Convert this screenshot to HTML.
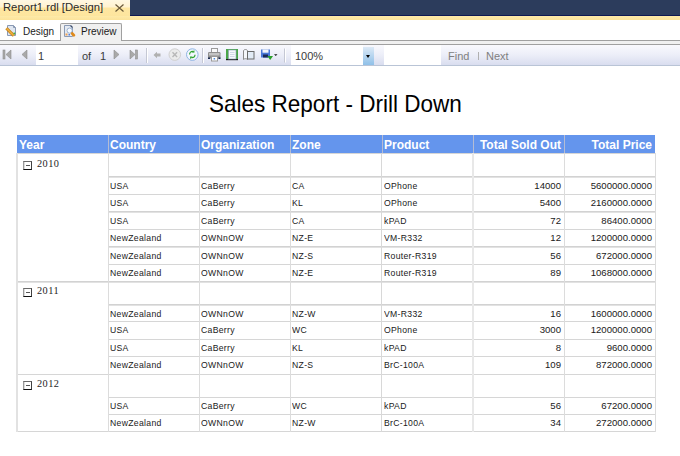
<!DOCTYPE html>
<html><head><meta charset="utf-8">
<style>
*{margin:0;padding:0;box-sizing:border-box}
html,body{width:680px;height:456px;overflow:hidden;background:#fff;font-family:"Liberation Sans",sans-serif;position:relative}
.a{position:absolute}
.t{position:absolute;white-space:nowrap;line-height:1}
#navy{left:130px;top:0;width:550px;height:16px;background:#2c3c5c;border-bottom:1px solid #0e1852}
#doctab{left:0;top:0;width:130px;height:20px;background:linear-gradient(#fff8e2 0,#fff2d0 7px,#fee7a2 8px,#fde49c 100%)}
#strip{left:0;top:16px;width:680px;height:4px;background:linear-gradient(#feeaa8,#fce39a)}
#tabline1{left:0;top:40px;width:680px;height:1px;background:#a0a0a0}
#tabfill{left:0;top:41px;width:680px;height:3px;background:#f0f0f0}
#tabline2{left:0;top:44px;width:680px;height:1px;background:#a0a0a0}
#prevtab{left:60px;top:23px;width:62px;height:18px;background:#f0f0f0;border:1px solid #a0a0a0;border-bottom:none;border-radius:2px 2px 0 0}
#toolbar{left:0;top:45px;width:680px;height:21px;background:linear-gradient(#f9f9fd,#eceef8 50%,#d9ddef);border-bottom:1px solid #b9c4d6}
.tb{font-size:11px;color:#808080;margin-top:0.5px}
.hdr{position:absolute;top:135px;height:18px;background:#6495ed}
.ht{position:absolute;top:139px;font-weight:bold;font-size:12px;color:#fff;white-space:nowrap;line-height:1}
.hl{position:absolute;background:#d3d3d3}
.d{position:absolute;font-size:9.6px;color:#1a1a1a;white-space:nowrap;line-height:1;transform:scaleX(0.9);transform-origin:0 0;letter-spacing:0.35px}
.n{position:absolute;font-size:9.6px;color:#1a1a1a;white-space:nowrap;line-height:1;text-align:right}
.r{text-align:right}
.yr{position:absolute;font-family:"Liberation Serif",serif;font-size:10.3px;color:#1e1e1e;line-height:1;letter-spacing:0.45px}
.box{position:absolute;left:23px;width:9px;height:9px;border-left:1px solid #9a9a9a;border-top:1px solid #6a6a6a;border-right:1px solid #404040;border-bottom:1px solid #111;background:#fff;box-shadow:inset 1px 0 #dcdcdc}
.box:after{content:"";position:absolute;left:2px;top:3px;width:4px;height:1px;background:#555}
</style></head><body>
<div id="navy" class="a"></div>
<div id="doctab" class="a"></div>
<div id="strip" class="a"></div>
<div class="t" style="left:3px;top:2px;font-size:11.25px;color:#2a2a2a">Report1.rdl [Design]</div>
<svg class="a" style="left:115px;top:4px" width="9" height="8" viewBox="0 0 9 8"><path d="M0.5 0.5L8.5 7.5M8.5 0.5L0.5 7.5" stroke="#6b5a3a" stroke-width="1.2"/></svg>

<div id="tabline1" class="a"></div>
<div id="tabfill" class="a"></div>
<div id="tabline2" class="a"></div>
<div id="prevtab" class="a"></div>
<div class="t" style="left:23px;top:27px;font-size:10px;color:#1a1a1a">Design</div>
<div class="t" style="left:81px;top:27px;font-size:10px;color:#1a1a1a">Preview</div>

<div id="toolbar" class="a"></div>

<!-- tab icons -->
<svg class="a" style="left:4px;top:24px" width="13" height="13" viewBox="0 0 13 13">
 <path d="M3.5 1.5H9.5L11.5 3.5V11.5H3.5Z" fill="#dfe6f0" stroke="#8a9ab4" stroke-width="1"/>
 <path d="M9.5 1.5V3.5H11.5" fill="none" stroke="#8a9ab4" stroke-width="1"/>
 <path d="M2.4 4.2L9.8 11.6" stroke="#c07a10" stroke-width="3" stroke-linecap="butt"/>
 <path d="M2.4 4.2L9.8 11.6" stroke="#eeb040" stroke-width="1.6"/>
 <rect x="9.6" y="8.6" width="1.6" height="1.6" fill="#3cb43c"/>
</svg>
<svg class="a" style="left:63px;top:24px" width="13" height="13" viewBox="0 0 13 13">
 <path d="M1.5 1.5H7.5L9.5 3.5V12.5H1.5Z" fill="#e4eaf2" stroke="#8a9ab4" stroke-width="1"/>
 <path d="M7.5 1.5L9.5 3.5" stroke="#3a4a6a" stroke-width="1.2"/>
 <circle cx="6.6" cy="6.6" r="2.6" fill="#f8fbff" stroke="#90a8c8" stroke-width="0.9"/>
 <path d="M9.2 9.6L10.8 11.2" stroke="#e08a1a" stroke-width="2.8" stroke-linecap="round"/>
 <rect x="2.5" y="9.5" width="2" height="2" fill="#f0a050"/>
 <rect x="5.5" y="10" width="1.5" height="1.5" fill="#5080e0"/>
</svg>
<!-- toolbar icons -->
<svg class="a" style="left:0;top:45px" width="290" height="20" viewBox="0 0 290 20">
 <g fill="#a9a9a9" stroke="#8f8f8f" stroke-width="0.6">
  <rect x="3" y="5" width="2" height="9"/>
  <path d="M11 5V14L6 9.5Z"/>
  <path d="M27 5V14L22 9.5Z"/>
  <path d="M114 5V14L119 9.5Z"/>
  <path d="M130 5V14L135 9.5Z"/>
  <rect x="135.5" y="5" width="2" height="9"/>
 </g>
 <rect x="146" y="3" width="1" height="15" fill="#c5c8d4"/><rect x="147" y="3" width="1" height="15" fill="#fff"/>
 <path d="M153.5 10L157 6.8V8.6H160.5V11.4H157V13.2Z" fill="#b0b0b0"/>
 <circle cx="174.8" cy="9.6" r="5.8" fill="#ebebeb" stroke="#d0d0d0" stroke-width="1"/>
 <path d="M172.5 7.3L177.1 11.9M177.1 7.3L172.5 11.9" stroke="#b8b8b8" stroke-width="1.4"/>
 <circle cx="192.3" cy="9.6" r="5.8" fill="#f2f7fd" stroke="#8fb4e4" stroke-width="1"/>
 <path d="M189.6 9.4C189.6 7.4 191 6.3 193 6.5" fill="none" stroke="#2ea42e" stroke-width="1.2"/>
 <path d="M194.2 4.9L194.6 7.6L191.9 7.8Z" fill="#2ea42e"/>
 <path d="M195 9.8C195 11.8 193.6 12.9 191.6 12.7" fill="none" stroke="#2ea42e" stroke-width="1.2"/>
 <path d="M190.4 14.3L190 11.6L192.7 11.4Z" fill="#2ea42e"/>
 <rect x="202" y="3" width="1" height="15" fill="#c5c8d4"/><rect x="203" y="3" width="1" height="15" fill="#fff"/>
 <!-- printer -->
 <rect x="211.5" y="3.5" width="6" height="4" fill="#fafafa" stroke="#9a9a9a" stroke-width="1"/>
 <rect x="208" y="7" width="12.5" height="6.5" rx="1.2" fill="#8e8e8e"/>
 <rect x="209" y="8" width="10.5" height="2.5" fill="#c4c4c4"/>
 <rect x="208" y="12.5" width="2" height="1.5" fill="#1a2a50"/><rect x="218.5" y="12.5" width="2" height="1.5" fill="#1a2a50"/>
 <rect x="211.5" y="11.5" width="6" height="4.5" fill="#fff" stroke="#9a9a9a" stroke-width="1"/>
 <rect x="213.6" y="13" width="1.5" height="1.5" fill="#4a8ae0"/>
 <!-- page layout -->
 <rect x="226" y="4" width="12" height="11" fill="#4aa64a"/>
 <rect x="226" y="14" width="12" height="1.2" fill="#1a1a1a"/>
 <rect x="228.5" y="5" width="7.5" height="9" fill="#f6f8fc" stroke="#8da0b8" stroke-width="0.6"/>
 <path d="M230 7.5H234.5M230 9.5H234.5M230 11.5H234.5" stroke="#c0cce0" stroke-width="0.7"/>
 <!-- page setup -->
 <path d="M243.5 5.5C244.5 4.2 246.5 4.2 247.5 5.5V14.5C246.5 13.4 244.5 13.4 243.5 14.5Z" fill="#f4f6fa" stroke="#8a8a8a" stroke-width="1"/>
 <rect x="247.5" y="6.5" width="6.5" height="7.5" fill="#e2ebf6" stroke="#6a6a6a" stroke-width="1"/>
 <!-- save -->
 <rect x="261" y="4.5" width="9" height="8" fill="#4a78d8"/>
 <rect x="262.5" y="4.5" width="6" height="3.2" fill="#f4f6fa"/>
 <rect x="263" y="9.5" width="5" height="3" fill="#1a2a5a"/>
 <path d="M267.3 11H273L270.2 15Z" fill="#2aa02a"/>
 <path d="M274 9.2H277.5L275.75 10.9Z" fill="#1a1a1a"/>
 <rect x="284" y="3.5" width="1" height="14" fill="#c5c8d4"/><rect x="285" y="3.5" width="1" height="14" fill="#fff"/>
</svg>
<!-- page textbox -->
<div class="a" style="left:36px;top:45px;width:42px;height:20px;background:#fff"></div>
<div class="t tb" style="left:38px;top:50px;color:#3a3a3a">1</div>
<div class="t tb" style="left:82px;top:50px;color:#3a3a3a">of</div>
<div class="t tb" style="left:100px;top:50px;color:#3a3a3a">1</div>
<!-- zoom -->
<div class="a" style="left:291px;top:45px;width:72px;height:20px;background:#fff"></div>
<div class="t tb" style="left:295px;top:50px;color:#3a3a3a">100%</div>
<div class="a" style="left:363px;top:47px;width:11px;height:18px;background:linear-gradient(#dce9f6,#8fc0e8)"></div>
<div class="a" style="left:366px;top:55px;width:0;height:0;border-left:2.5px solid transparent;border-right:2.5px solid transparent;border-top:3px solid #000"></div>
<div class="a" style="left:384px;top:45px;width:57px;height:20px;background:#fff"></div>
<div class="t tb" style="left:448px;top:50px">Find</div>
<div class="a" style="left:478px;top:52px;width:1px;height:8px;background:#b0b0b0"></div>
<div class="t tb" style="left:486px;top:50px">Next</div>

<!-- title -->
<div class="t" style="left:209px;top:92px;font-size:24px;color:#000;transform:scaleX(0.938);transform-origin:0 0">Sales Report - Drill Down</div>

<!-- table -->
<div class="hdr" style="left:17px;width:638px"></div>
<div class="a" style="left:108px;top:135px;width:1px;height:18px;background:#b4bcd4"></div>
<div class="a" style="left:199px;top:135px;width:1px;height:18px;background:#b4bcd4"></div>
<div class="a" style="left:290px;top:135px;width:1px;height:18px;background:#b4bcd4"></div>
<div class="a" style="left:382px;top:135px;width:1px;height:18px;background:#b4bcd4"></div>
<div class="a" style="left:473px;top:135px;width:1px;height:18px;background:#b4bcd4"></div>
<div class="a" style="left:564px;top:135px;width:1px;height:18px;background:#b4bcd4"></div>
<div class="ht" style="left:19px">Year</div>
<div class="ht" style="left:110px">Country</div>
<div class="ht" style="left:201px">Organization</div>
<div class="ht" style="left:292px">Zone</div>
<div class="ht" style="left:384px">Product</div>
<div class="ht r" style="left:473px;width:88px">Total Sold Out</div>
<div class="ht r" style="left:564px;width:88px">Total Price</div>
<div class="a" style="left:108px;top:176px;width:548px;height:1px;background:#d2d2d2"></div>
<div class="a" style="left:108px;top:177px;width:548px;height:1px;background:#e2e2e2"></div>
<div class="a" style="left:108px;top:194px;width:548px;height:1px;background:#d6d6d6"></div>
<div class="a" style="left:108px;top:211px;width:548px;height:1px;background:#d2d2d2"></div>
<div class="a" style="left:108px;top:212px;width:548px;height:1px;background:#e2e2e2"></div>
<div class="a" style="left:108px;top:229px;width:548px;height:1px;background:#d6d6d6"></div>
<div class="a" style="left:108px;top:246px;width:548px;height:1px;background:#d2d2d2"></div>
<div class="a" style="left:108px;top:247px;width:548px;height:1px;background:#e2e2e2"></div>
<div class="a" style="left:108px;top:264px;width:548px;height:1px;background:#d6d6d6"></div>
<div class="a" style="left:108px;top:304px;width:548px;height:1px;background:#d2d2d2"></div>
<div class="a" style="left:108px;top:305px;width:548px;height:1px;background:#e2e2e2"></div>
<div class="a" style="left:108px;top:321px;width:548px;height:1px;background:#d6d6d6"></div>
<div class="a" style="left:108px;top:339px;width:548px;height:1px;background:#d6d6d6"></div>
<div class="a" style="left:108px;top:356px;width:548px;height:1px;background:#d6d6d6"></div>
<div class="a" style="left:108px;top:397px;width:548px;height:1px;background:#d6d6d6"></div>
<div class="a" style="left:108px;top:414px;width:548px;height:1px;background:#d6d6d6"></div>
<div class="a" style="left:17px;top:153px;width:639px;height:1px;background:#d6d6d6"></div>
<div class="a" style="left:17px;top:281px;width:639px;height:1px;background:#d2d2d2"></div>
<div class="a" style="left:17px;top:282px;width:639px;height:1px;background:#e2e2e2"></div>
<div class="a" style="left:17px;top:374px;width:639px;height:1px;background:#d6d6d6"></div>
<div class="a" style="left:17px;top:431px;width:639px;height:1px;background:#d6d6d6"></div>
<div class="a" style="left:16px;top:153px;width:2px;height:279px;background:#e2e2e2"></div>
<div class="a" style="left:108px;top:153px;width:1px;height:279px;background:#dcdcdc"></div>
<div class="a" style="left:199px;top:153px;width:1px;height:279px;background:#dcdcdc"></div>
<div class="a" style="left:290px;top:153px;width:1px;height:279px;background:#dcdcdc"></div>
<div class="a" style="left:381px;top:153px;width:1px;height:279px;background:#d8d8d8"></div>
<div class="a" style="left:472px;top:153px;width:2px;height:279px;background:#e8e8e8"></div>
<div class="a" style="left:564px;top:153px;width:1px;height:279px;background:#dcdcdc"></div>
<div class="a" style="left:655px;top:153px;width:1px;height:279px;background:#dcdcdc"></div>
<div class="box" style="top:161px"></div>
<div class="yr" style="left:37px;top:159px">2010</div>
<div class="box" style="top:288px"></div>
<div class="yr" style="left:37px;top:286px">2011</div>
<div class="box" style="top:381px"></div>
<div class="yr" style="left:37px;top:379px">2012</div>
<div class="d" style="left:110px;top:181px">USA</div>
<div class="d" style="left:201px;top:181px">CaBerry</div>
<div class="d" style="left:292px;top:181px">CA</div>
<div class="d" style="left:384px;top:181px">OPhone</div>
<div class="n" style="left:473px;width:88px;top:181px">14000</div>
<div class="n" style="left:564px;width:88px;top:181px">5600000.0000</div>
<div class="d" style="left:110px;top:198px">USA</div>
<div class="d" style="left:201px;top:198px">CaBerry</div>
<div class="d" style="left:292px;top:198px">KL</div>
<div class="d" style="left:384px;top:198px">OPhone</div>
<div class="n" style="left:473px;width:88px;top:198px">5400</div>
<div class="n" style="left:564px;width:88px;top:198px">2160000.0000</div>
<div class="d" style="left:110px;top:216px">USA</div>
<div class="d" style="left:201px;top:216px">CaBerry</div>
<div class="d" style="left:292px;top:216px">CA</div>
<div class="d" style="left:384px;top:216px">kPAD</div>
<div class="n" style="left:473px;width:88px;top:216px">72</div>
<div class="n" style="left:564px;width:88px;top:216px">86400.0000</div>
<div class="d" style="left:110px;top:233px">NewZealand</div>
<div class="d" style="left:201px;top:233px">OWNnOW</div>
<div class="d" style="left:292px;top:233px">NZ-E</div>
<div class="d" style="left:384px;top:233px">VM-R332</div>
<div class="n" style="left:473px;width:88px;top:233px">12</div>
<div class="n" style="left:564px;width:88px;top:233px">1200000.0000</div>
<div class="d" style="left:110px;top:251px">NewZealand</div>
<div class="d" style="left:201px;top:251px">OWNnOW</div>
<div class="d" style="left:292px;top:251px">NZ-S</div>
<div class="d" style="left:384px;top:251px">Router-R319</div>
<div class="n" style="left:473px;width:88px;top:251px">56</div>
<div class="n" style="left:564px;width:88px;top:251px">672000.0000</div>
<div class="d" style="left:110px;top:268px">NewZealand</div>
<div class="d" style="left:201px;top:268px">OWNnOW</div>
<div class="d" style="left:292px;top:268px">NZ-E</div>
<div class="d" style="left:384px;top:268px">Router-R319</div>
<div class="n" style="left:473px;width:88px;top:268px">89</div>
<div class="n" style="left:564px;width:88px;top:268px">1068000.0000</div>
<div class="d" style="left:110px;top:309px">NewZealand</div>
<div class="d" style="left:201px;top:309px">OWNnOW</div>
<div class="d" style="left:292px;top:309px">NZ-W</div>
<div class="d" style="left:384px;top:309px">VM-R332</div>
<div class="n" style="left:473px;width:88px;top:309px">16</div>
<div class="n" style="left:564px;width:88px;top:309px">1600000.0000</div>
<div class="d" style="left:110px;top:325px">USA</div>
<div class="d" style="left:201px;top:325px">CaBerry</div>
<div class="d" style="left:292px;top:325px">WC</div>
<div class="d" style="left:384px;top:325px">OPhone</div>
<div class="n" style="left:473px;width:88px;top:325px">3000</div>
<div class="n" style="left:564px;width:88px;top:325px">1200000.0000</div>
<div class="d" style="left:110px;top:343px">USA</div>
<div class="d" style="left:201px;top:343px">CaBerry</div>
<div class="d" style="left:292px;top:343px">KL</div>
<div class="d" style="left:384px;top:343px">kPAD</div>
<div class="n" style="left:473px;width:88px;top:343px">8</div>
<div class="n" style="left:564px;width:88px;top:343px">9600.0000</div>
<div class="d" style="left:110px;top:360px">NewZealand</div>
<div class="d" style="left:201px;top:360px">OWNnOW</div>
<div class="d" style="left:292px;top:360px">NZ-S</div>
<div class="d" style="left:384px;top:360px">BrC-100A</div>
<div class="n" style="left:473px;width:88px;top:360px">109</div>
<div class="n" style="left:564px;width:88px;top:360px">872000.0000</div>
<div class="d" style="left:110px;top:401px">USA</div>
<div class="d" style="left:201px;top:401px">CaBerry</div>
<div class="d" style="left:292px;top:401px">WC</div>
<div class="d" style="left:384px;top:401px">kPAD</div>
<div class="n" style="left:473px;width:88px;top:401px">56</div>
<div class="n" style="left:564px;width:88px;top:401px">67200.0000</div>
<div class="d" style="left:110px;top:418px">NewZealand</div>
<div class="d" style="left:201px;top:418px">OWNnOW</div>
<div class="d" style="left:292px;top:418px">NZ-W</div>
<div class="d" style="left:384px;top:418px">BrC-100A</div>
<div class="n" style="left:473px;width:88px;top:418px">34</div>
<div class="n" style="left:564px;width:88px;top:418px">272000.0000</div>
</body></html>
